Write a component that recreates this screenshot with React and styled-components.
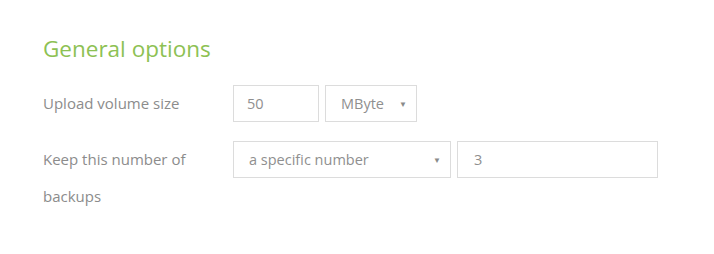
import React from "react";
import styled, { createGlobalStyle } from "styled-components";

const GlobalStyle = createGlobalStyle`
    body {
        margin: 0;
        background: #fff;
        font-family: "Open Sans", "Liberation Sans", sans-serif;
    }
`

const Panel = styled.section`
    padding: 34px 0 0 43px;
    width: 614px;
`

const Heading = styled.h2`
    margin: 0 0 21px;
    font-size: 22.5px;
    font-weight: 400;
    line-height: 30px;
    color: #8dc153;
`

const Row = styled.div`
    display: grid;
    grid-template-columns: 190px 1fr;
    align-items: start;
    margin-bottom: ${props => props.$gap || 0}px;
`

const Label = styled.label`
    font-size: 15px;
    line-height: 37px;
    color: #8c8c8c;
    max-width: 165px;
`

const Controls = styled.div`
    display: flex;
    gap: 6px;
`

const Field = styled.div`
    box-sizing: border-box;
    width: ${props => props.$width}px;
    height: 37px;
    border: 1px solid #dcdcdc;
    display: flex;
    align-items: center;
    justify-content: space-between;
    padding: 0 9px 0 ${props => props.$pad || 15}px;
    font-size: 14.5px;
    color: #8f8f8f;
`

const Arrow = styled.span`
    font-size: 8px;
    color: #8a8a8a;
`

const Select = ({ width, value }) => (
    <Field $width={width}>
        <span>{value}</span>
        <Arrow>▼</Arrow>
    </Field>
)

export default function App() {
    return (
        <>
            <GlobalStyle />
            <Panel>
                <Heading>General options</Heading>
                <Row $gap={19}>
                    <Label>Upload volume size</Label>
                    <Controls>
                        <Field $width={86} $pad={13}>50</Field>
                        <Select width={92} value="MByte" />
                    </Controls>
                </Row>
                <Row>
                    <Label>Keep this number of backups</Label>
                    <Controls>
                        <Select width={218} value="a specific number" />
                        <Field $width={201} $pad={16}>3</Field>
                    </Controls>
                </Row>
            </Panel>
        </>
    )
}
